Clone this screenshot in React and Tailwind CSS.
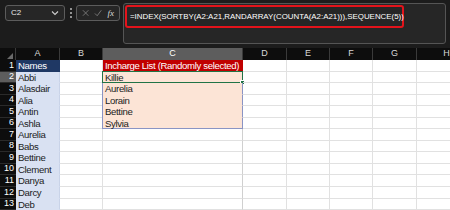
const cols = [
  { id: 'A', w: 44 },
  { id: 'B', w: 43 },
  { id: 'C', w: 140 },
  { id: 'D', w: 44 },
  { id: 'E', w: 43 },
  { id: 'F', w: 43 },
  { id: 'G', w: 44 },
  { id: 'H', w: 60 },
]

const names = ['Names', 'Abbi', 'Alasdair', 'Alia', 'Antin', 'Ashla', 'Aurelia', 'Babs', 'Bettine', 'Clement', 'Danya', 'Darcy', 'Deb']
const picks = ['Incharge List (Randomly selected)', 'Killie', 'Aurelia', 'Lorain', 'Bettine', 'Sylvia']

const Cell = ({ w, className = 'border-[#e1e1e1]', children }) => (
  <div
    style={{ width: w }}
    className={`relative shrink-0 h-full border-r border-b whitespace-nowrap px-[2px] leading-[11.5px] text-[9.6px] tracking-[-0.35px] text-[#222] ${className}`}
  >
    {children}
  </div>
)

const App = () => {
  return (
    <div className="w-[450px] h-[210px] overflow-hidden bg-white font-['Liberation_Sans',Arial,sans-serif]">
      {/* formula bar area */}
      <div className="h-[48px] bg-[#1c1c1c] flex items-start">
        <div className="ml-[5px] mt-[5px] w-[60px] h-[16px] rounded-[3px] border border-[#5c5c5c] bg-[#262626] flex items-center justify-between px-[5px]">
          <span className="text-[8px] text-[#e8e8e8]">C2</span>
          <svg width="8" height="6" viewBox="0 0 8 6"><path d="M1 1.5 L4 4.5 L7 1.5" fill="none" stroke="#cfcfcf" strokeWidth="1.1" /></svg>
        </div>
        <div className="mt-[8px] ml-[5px] flex flex-col gap-[2px]">
          <span className="w-[2px] h-[2px] bg-[#bbb] rounded-full" />
          <span className="w-[2px] h-[2px] bg-[#bbb] rounded-full" />
          <span className="w-[2px] h-[2px] bg-[#bbb] rounded-full" />
        </div>
        <div className="ml-[4px] mt-[5px] w-[44px] h-[16px] rounded-[3px] border border-[#5c5c5c] bg-[#262626] flex items-center gap-[5px] px-[5px]">
          <svg width="8" height="8" viewBox="0 0 8 8"><path d="M1 1 L7 7 M7 1 L1 7" stroke="#7a7a7a" strokeWidth="1" /></svg>
          <svg width="9" height="8" viewBox="0 0 9 8"><path d="M1 4.5 L3.5 7 L8 1" fill="none" stroke="#7a7a7a" strokeWidth="1" /></svg>
          <span className="text-[9px] italic text-[#dcdcdc] font-['Liberation_Serif',serif] leading-none">fx</span>
        </div>
        <div className="ml-[3px] mt-[3px] w-[323px] h-[41px] rounded-[3px] border border-[#555] bg-[#262626] p-px">
          <div className="w-[279px] h-[23px] rounded-[3px] border-2 border-[#e3131b] flex items-center pl-[3px]">
            <span className="text-[7.9px] text-white">=INDEX(SORTBY(A2:A21,RANDARRAY(COUNTA(A2:A21))),SEQUENCE(5))</span>
          </div>
        </div>
      </div>

      {/* column headers */}
      <div className="flex h-[12px] bg-[#0d0d0d] text-[9px] text-[#d8d8d8]">
        <div className="w-[16px] shrink-0 flex items-end justify-end pr-[2px] pb-[1px] border-r border-[#3a3a3a]">
          <svg width="6" height="6" viewBox="0 0 6 6"><path d="M6 0 L6 6 L0 6 Z" fill="#6a6a6a" /></svg>
        </div>
        {cols.map((c) => (
          <div
            key={c.id}
            style={{ width: c.w }}
            className={`shrink-0 flex items-center justify-center border-r border-[#3a3a3a] ${c.id === 'C' ? 'bg-[#5d5d5d] text-white' : ''}`}
          >
            {c.id}
          </div>
        ))}
      </div>

      {/* rows */}
      {names.map((n, i) => {
        const r = i + 1
        const pick = picks[i]
        return (
          <div key={r} className="flex h-[11.55px]">
            <div className={`w-[16px] shrink-0 h-full flex items-center justify-end pr-[2px] text-[9px] text-white border-b border-[#2a2a2a] ${r === 2 ? 'bg-[#5d5d5d]' : 'bg-[#0d0d0d]'}`}>
              {r}
            </div>
            <Cell w={44} className={r === 1 ? 'bg-[#1f3864] text-white border-[#1f3864]' : 'bg-[#d9e1f2] border-b-[#d9e1f2] border-r-[#c9d3e8]'}>
              {n}
            </Cell>
            <Cell w={43} />
            <Cell
              w={140}
              className={
                r === 1
                  ? 'bg-[#c00000] text-white border-[#c00000]'
                  : r <= 6
                  ? 'bg-[#fce4d6] border-b-[#fce4d6] border-r-[#8a94c4]'
                  : 'border-b-[#e1e1e1] border-r-[#d0d0d0]'
              }
            >
              {r >= 2 && r <= 6 && <span className="absolute left-[-1px] top-0 bottom-[-1px] w-px bg-[#8a94c4]" />}
              {r === 6 && <span className="absolute left-[-1px] right-[-1px] bottom-[-1px] h-px bg-[#8a94c4]" />}
              {r === 2 && <span className="absolute left-[-1px] top-[-1px] right-[-1px] bottom-[-1px] border-[1.5px] border-[#217346]" />}
              {r === 2 && <span className="absolute right-[-3px] bottom-[-3px] w-[5px] h-[5px] bg-[#217346] border border-white" />}
              <span className="relative">{pick}</span>
            </Cell>
            <Cell w={44} />
            <Cell w={43} />
            <Cell w={43} />
            <Cell w={44} />
            <Cell w={60} />
          </div>
        )
      })}
    </div>
  )
}

export default App
